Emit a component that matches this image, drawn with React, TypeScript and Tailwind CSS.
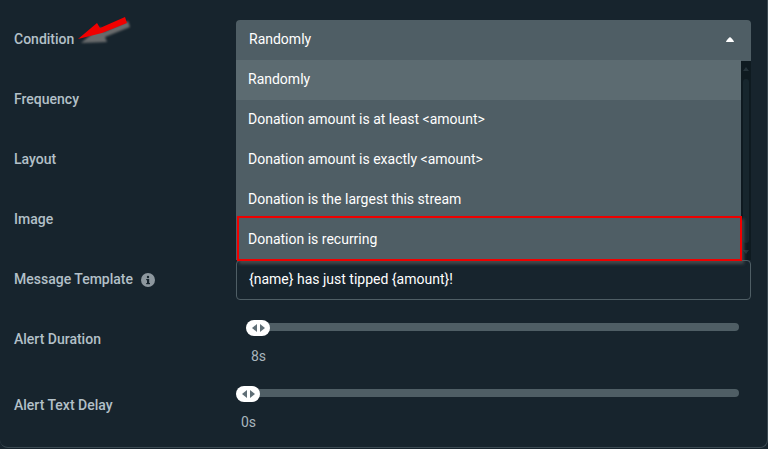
const options = [
  "Randomly",
  "Donation amount is at least <amount>",
  "Donation amount is exactly <amount>",
  "Donation is the largest this stream",
  "Donation is recurring",
]

const SliderThumb: React.FC<{ className: string }> = ({ className }) => (
  <div className={`absolute top-[-3px] flex h-4 w-6 items-center justify-center gap-[3px] rounded-full bg-white ${className}`}>
    <svg width="5" height="8" viewBox="0 0 5 8"><path d="M5 0v8L0 4z" fill="#5f6e76" /></svg>
    <svg width="5" height="8" viewBox="0 0 5 8"><path d="M0 0v8l5-4z" fill="#5f6e76" /></svg>
  </div>
)

const Row: React.FC<{ label: string; children?: React.ReactNode }> = ({ label, children }) => (
  <div className="flex h-10 items-center">
    <div className="flex w-[222px] shrink-0 items-center pb-0.5 font-medium text-[#b3c0c8]">{label}{label === "Message Template" && (
      <svg className="mt-0.5 ml-2" width="14" height="14" viewBox="0 0 14 14">
        <circle cx="7" cy="7" r="7" fill="#8d979e" />
        <rect x="6" y="6" width="2.2" height="5" fill="#17242d" />
        <rect x="5.2" y="6" width="2" height="1.2" fill="#17242d" />
        <rect x="5.2" y="10" width="3.8" height="1.2" fill="#17242d" />
        <circle cx="7" cy="4" r="1.2" fill="#17242d" />
      </svg>
    )}</div>
    <div className="min-w-0 flex-1">{children}</div>
  </div>
)

export default function App() {
  return (
    <div className="h-[449px] w-[768px] overflow-hidden bg-[#17242d] text-[14px] [font-family:Roboto,sans-serif]">
      <div className="relative h-[448px] rounded-b-lg border-r border-b border-[#3c4a52] pt-5 pr-4 pl-3.5">
        <div className="flex flex-col gap-5">
          <Row label="Condition">
            <div className="relative">
              <div className="flex h-10 items-center justify-between rounded-t bg-[#4f5e65] pr-[17px] pb-0.5 pl-[13px] text-white">
                Randomly
                <svg width="8" height="5" viewBox="0 0 8 5"><path d="M0 5q0-1 1.2-2.2L3.2.6q.8-.8 1.6 0l2 2.2Q8 4 8 5z" fill="#fff" /></svg>
              </div>
              <div className="absolute top-10 left-0 z-10 w-full bg-[#4f5e65]">
                <div className="absolute top-px right-0 bottom-0 flex w-2.5 flex-col items-center justify-between bg-[#0e1a20] py-1.5">
                  <div className="h-0 w-0 border-x-[3px] border-b-[4px] border-x-transparent border-b-[#26343b]" />
                  <div className="h-[164px] w-1.5 rounded-full bg-[#17262d]" />
                  <div className="h-0 w-0 border-x-[3px] border-t-[4px] border-x-transparent border-t-[#26343b]" />
                </div>
                {options.map((o, i) => (
                  <div key={o} className={`flex h-10 items-center pb-0.5 pl-3 text-white ${i === 0 ? "mr-2.5 bg-[#5c6b71]" : ""}`}>{o}</div>
                ))}
                <div className="absolute top-[156px] left-px h-[45px] w-[505px] border-2 border-[#f00000] shadow-[2px_3px_3px_rgba(90,90,90,0.7)]" />
              </div>
            </div>
          </Row>
          <Row label="Frequency" />
          <Row label="Layout" />
          <Row label="Image" />
          <Row label="Message Template">
            <div className="flex h-10 items-center rounded border border-[#4f5e65] pb-0.5 pl-3 text-white">{"{name} has just tipped {amount}!"}</div>
          </Row>
          <Row label="Alert Duration">
            <div className="relative mt-[-17px] pr-3 pl-3">
              <div className="relative h-2 rounded-full bg-[#4f5e65]">
                <SliderThumb className="left-[-2px]" />
              </div>
              <div className="absolute top-[23px] left-[15px] text-[#a9b6bd]">8s</div>
            </div>
          </Row>
          <div className="mt-[6px] flex h-10 items-center">
            <div className="w-[222px] shrink-0 pb-0.5 font-medium text-[#b3c0c8]">Alert Text Delay</div>
            <div className="relative mt-[-26px] flex-1 pr-3 pl-1">
              <div className="relative h-2 rounded-full bg-[#4f5e65]">
                <SliderThumb className="left-[-4px]" />
              </div>
              <div className="absolute top-[23px] left-[5px] text-[#a9b6bd]">0s</div>
            </div>
          </div>
        </div>
        <svg className="absolute top-[12px] left-[72px]" width="64" height="36" viewBox="0 0 64 36">
          <path className="blur-[1px]" d="M9 31 L28 15 L31 20 L56 9 L58 15 L33 25 L35 30 Z" fill="#777" opacity="0.85" />
          <path d="M6 27 L25 11 L28 16 L53 5 L55 11 L30 21 Z" fill="#f00000" />
        </svg>
      </div>
    </div>
  )
}
